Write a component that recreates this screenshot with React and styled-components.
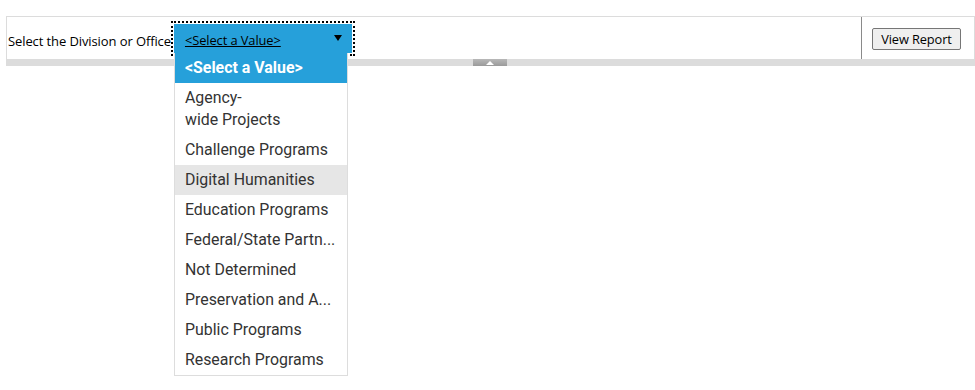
import React from 'react';
import styled, { createGlobalStyle } from 'styled-components';

const GlobalStyle = createGlobalStyle`
  body {
    margin: 0;
    background: #fff;
    font-family: "Open Sans", "Noto Sans", sans-serif;
  }
`;

const Page = styled.div`
  padding: 16px 0 0 6px;
  height: 390px;
  box-sizing: border-box;
  overflow: hidden;
`;

const Panel = styled.div`
  border: 1px solid #dcdcdc;
  border-bottom: none;
  width: 969px;
  box-sizing: border-box;
`;

const Toolbar = styled.div`
  display: flex;
  align-items: stretch;
  height: 42px;
`;

const Params = styled.div`
  flex: 1;
  display: flex;
  align-items: center;
  padding-left: 1px;
`;

const Label = styled.span`
  font-family: "Open Sans", sans-serif;
  font-size: 13px;
  letter-spacing: -0.1px;
  color: #000;
  margin-top: 5px;
  white-space: nowrap;
`;

const SelectWrap = styled.div`
  position: relative;
  margin-left: 3px;
  margin-top: 1px;
`;

const SelectBox = styled.div`
  width: 178px;
  height: 29px;
  box-sizing: border-box;
  background: #26a0da;
  outline: 2px dotted #000;
  outline-offset: 1px;
  display: flex;
  align-items: center;
  justify-content: space-between;
  padding: 0 10px 0 11px;
`;

const SelectText = styled.span`
  font-family: "Open Sans", sans-serif;
  font-size: 12.9px;
  letter-spacing: -0.1px;
  color: #000;
  text-decoration: underline;
  margin-top: 3px;
`;

const Caret = styled.svg`
  width: 8px;
  height: 6px;
  margin-bottom: 2px;
`;

const Menu = styled.ul`
  position: absolute;
  top: 29px;
  left: 0;
  width: 174px;
  box-sizing: border-box;
  margin: 0;
  padding: 0;
  list-style: none;
  background: #fff;
  border: 1px solid #ddd;
  border-top: none;
  z-index: 5;
`;

const Item = styled.li`
  font-family: Roboto, sans-serif;
  font-size: 15.9px;
  line-height: 22px;
  padding: 4px 10px;
  color: ${p => (p.$selected ? '#fff' : '#333')};
  font-weight: ${p => (p.$selected ? 700 : 400)};
  background: ${p => (p.$selected ? '#26a0da' : p.$hover ? '#e6e6e6' : '#fff')};
  white-space: nowrap;
`;

const Divider = styled.div`
  width: 1px;
  background: #8a8a8a;
`;

const Actions = styled.div`
  width: 112px;
  display: flex;
  align-items: center;
  padding-left: 10px;
  box-sizing: border-box;
`;

const Button = styled.button`
  font-family: "Open Sans", sans-serif;
  font-size: 12.8px;
  letter-spacing: -0.1px;
  color: #000;
  height: 22px;
  width: 89px;
  padding: 0;
  background: #efefef;
  border: 1px solid #767676;
  border-radius: 2px;
  margin-top: 1px;
`;

const Splitter = styled.div`
  height: 7px;
  background: #dcdcdc;
  display: flex;
  justify-content: center;
`;

const Handle = styled.div`
  width: 34px;
  margin-right: 1px;
  background: linear-gradient(#b8b8b8, #9a9a9a);
  display: flex;
  align-items: center;
  justify-content: center;
`;

const options = [
  'Challenge Programs',
  'Digital Humanities',
  'Education Programs',
  'Federal/State Partn...',
  'Not Determined',
  'Preservation and A...',
  'Public Programs',
  'Research Programs',
];

export default function App() {
  return (
    <Page>
      <GlobalStyle />
      <Panel>
        <Toolbar>
          <Params>
            <Label>Select the Division or Office</Label>
            <SelectWrap>
              <SelectBox>
                <SelectText>&lt;Select a Value&gt;</SelectText>
                <Caret viewBox="0 0 8 6">
                  <path d="M0 0h8L4 6z" fill="#000" />
                </Caret>
              </SelectBox>
              <Menu>
                <Item $selected>&lt;Select a Value&gt;</Item>
                <Item>
                  Agency-
                  <br />
                  wide Projects
                </Item>
                {options.map(o => (
                  <Item key={o} $hover={o === 'Digital Humanities'}>
                    {o}
                  </Item>
                ))}
              </Menu>
            </SelectWrap>
          </Params>
          <Divider />
          <Actions>
            <Button>View Report</Button>
          </Actions>
        </Toolbar>
        <Splitter>
          <Handle>
            <svg width="8" height="4" viewBox="0 0 8 4">
              <path d="M0 4L4 0l4 4z" fill="#fff" />
            </svg>
          </Handle>
        </Splitter>
      </Panel>
    </Page>
  );
}
